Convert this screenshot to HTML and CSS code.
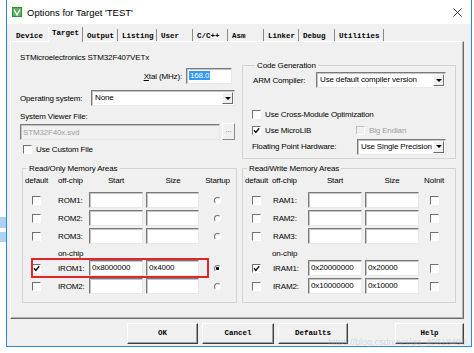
FILE: index.html
```html
<!DOCTYPE html>
<html lang="en">
<head>
    <meta charset="UTF-8">
    <meta name="viewport" content="width=device-width, initial-scale=1.0">
    <title>Options for Target 'TEST'</title>
    <link rel="stylesheet" href="styles.css">
</head>
<body>
    <div class="behind">
        <span class="frag frag-a"></span>
        <span class="frag frag-b"></span>
    </div>

    <div class="window">
        <div class="titlebar">
            <svg class="appicon" viewBox="0 0 10 10">
                <rect x="0" y="0" width="10" height="10" fill="#2f8f3a"/>
                <rect x="1" y="1" width="8" height="8" fill="#56b35c"/>
                <path d="M2 2.5 L5 8 L8 2.5" stroke="#fff" stroke-width="1.4" fill="none"/>
            </svg>
            <span class="title">Options for Target 'TEST'</span>
            <svg class="close" viewBox="0 0 9 9">
                <path d="M0.5 0.5 L8.5 8.5 M8.5 0.5 L0.5 8.5" stroke="#222" stroke-width="0.9"/>
            </svg>
        </div>

        <div class="tabs">
            <span class="tab first">Device</span>
            <span class="tab active">Target</span>
            <span class="tab">Output</span>
            <span class="tab">Listing</span>
            <span class="tab">User</span>
            <span class="tab">C/C++</span>
            <span class="tab">Asm</span>
            <span class="tab">Linker</span>
            <span class="tab">Debug</span>
            <span class="tab">Utilities</span>
        </div>

        <div class="panel">
            <div class="top">
                <div class="device">
                    <div class="row chip">STMicroelectronics STM32F407VETx</div>
                    <div class="row xtal">
                        <span><u>X</u>tal (MHz):</span>
                        <span class="edit xtal-edit"><span class="sel">168.0</span></span>
                    </div>
                    <div class="row os">
                        <span>Operating system:</span>
                        <span class="combo os-combo"><span class="val">None</span><span class="drop"><i></i></span></span>
                    </div>
                    <div class="row svlabel">System Viewer File:</div>
                    <div class="row svrow">
                        <span class="edit disabled sv-edit">STM32F40x.svd</span>
                        <span class="dots">...</span>
                    </div>
                    <div class="row custom">
                        <span class="cb"></span>
                        <span class="cb-text">Use Custom File</span>
                    </div>
                </div>

                <div class="group codegen">
                    <span class="caption">Code Generation</span>
                    <div class="row arm">
                        <span class="arm-label">ARM Compiler:</span>
                        <span class="combo arm-combo"><span class="val">Use default compiler version</span><span class="drop"><i></i></span></span>
                    </div>
                    <div class="row cmo">
                        <span class="cb"></span>
                        <span class="cb-text">Use Cross-Module Optimization</span>
                    </div>
                    <div class="row mlib">
                        <span class="opt microlib">
                            <span class="cb checked"><svg viewBox="0 0 7 7"><path d="M1 3.3 L2.8 5.4 L6.2 1.2" stroke="#111" stroke-width="1.4" fill="none"/></svg></span>
                            <span class="cb-text">Use MicroLIB</span>
                        </span>
                        <span class="opt">
                            <span class="cb off"></span>
                            <span class="cb-text grey">Big Endian</span>
                        </span>
                    </div>
                    <div class="row fph">
                        <span>Floating Point Hardware:</span>
                        <span class="combo fph-combo"><span class="val">Use Single Precision</span><span class="drop"><i></i></span></span>
                    </div>
                </div>
            </div>

            <div class="bottom">
                <div class="group mem ro">
                    <span class="caption">Read/Only Memory Areas</span>
                    <div class="grid">
                        <span class="hd hd-l">default</span>
                        <span class="hd hd-l">off-chip</span>
                        <span class="hd hd-c">Start</span>
                        <span class="hd hd-c">Size</span>
                        <span class="hd hd-r">Startup</span>

                        <span class="cb"></span><span class="lbl">ROM1:</span>
                        <span class="edit w1"></span><span class="edit w2"></span><span class="radio"></span>

                        <span class="cb"></span><span class="lbl">ROM2:</span>
                        <span class="edit w1"></span><span class="edit w2"></span><span class="radio"></span>

                        <span class="cb"></span><span class="lbl">ROM3:</span>
                        <span class="edit w1"></span><span class="edit w2"></span><span class="radio"></span>

                        <span></span><span class="onchip">on-chip</span><span></span><span></span><span></span>

                        <span class="cb checked"><svg viewBox="0 0 7 7"><path d="M1 3.3 L2.8 5.4 L6.2 1.2" stroke="#111" stroke-width="1.4" fill="none"/></svg></span>
                        <span class="lbl">IROM1:</span>
                        <span class="edit w1">0x8000000</span><span class="edit w2">0x4000</span><span class="radio on"></span>

                        <span class="cb"></span><span class="lbl">IROM2:</span>
                        <span class="edit w1"></span><span class="edit w2"></span><span class="radio"></span>
                    </div>
                    <div class="mark"></div>
                </div>

                <div class="group mem rw">
                    <span class="caption">Read/Write Memory Areas</span>
                    <div class="grid">
                        <span class="hd hd-l">default</span>
                        <span class="hd hd-l">off-chip</span>
                        <span class="hd hd-c">Start</span>
                        <span class="hd hd-c">Size</span>
                        <span class="hd noinit">NoInit</span>

                        <span class="cb"></span><span class="lbl">RAM1:</span>
                        <span class="edit w1"></span><span class="edit w1"></span><span class="cb ni"></span>

                        <span class="cb"></span><span class="lbl">RAM2:</span>
                        <span class="edit w1"></span><span class="edit w1"></span><span class="cb ni"></span>

                        <span class="cb"></span><span class="lbl">RAM3:</span>
                        <span class="edit w1"></span><span class="edit w1"></span><span class="cb ni"></span>

                        <span></span><span class="onchip">on-chip</span><span></span><span></span><span></span>

                        <span class="cb checked"><svg viewBox="0 0 7 7"><path d="M1 3.3 L2.8 5.4 L6.2 1.2" stroke="#111" stroke-width="1.4" fill="none"/></svg></span>
                        <span class="lbl">IRAM1:</span>
                        <span class="edit w1">0x20000000</span><span class="edit w1">0x20000</span><span class="cb ni"></span>

                        <span class="cb"></span><span class="lbl">IRAM2:</span>
                        <span class="edit w1">0x10000000</span><span class="edit w1">0x10000</span><span class="cb ni"></span>
                    </div>
                </div>
            </div>
        </div>

        <div class="buttons">
            <span class="btn ok">OK</span>
            <span class="btn cancel">Cancel</span>
            <span class="btn defaults">Defaults</span>
            <span class="btn help">Help</span>
        </div>

        <div class="watermark">https://blog.csdn.net/qq_40318498</div>
    </div>
</body>
</html>
```

FILE: styles.css
```css
*{
    margin: 0;
    padding: 0;
    box-sizing: border-box;
}
body{
    display: flex;
    width: 474px;
    height: 353px;
    overflow: hidden;
    background-color: #fff;
    font-family: "Liberation Sans", Arial, sans-serif;
    font-size: 8px;
    letter-spacing: -0.15px;
    color: #000;
}

/* bits of the window behind */
.behind{
    width: 6px;
    display: flex;
    flex-direction: column;
}
.frag{
    display: block;
    height: 11px;
    background-color: #a9d2f3;
}
.frag-a{
    margin-top: 217px;
}
.frag-b{
    margin-top: 4px;
    height: 10px;
}

.window{
    width: 466px;
    height: 347px;
    border: 1px solid #2b88d8;
    border-top: 0;
    background-color: #f0f0f0;
    display: flex;
    flex-direction: column;
    position: relative;
}

/* title bar */
.titlebar{
    height: 24px;
    background-color: #fff;
    display: flex;
    align-items: center;
    padding: 0 9px 0 5px;
}
.appicon{
    width: 10px;
    height: 10px;
    margin-right: 5px;
}
.title{
    font-size: 9.5px;
    letter-spacing: 0;
}
.close{
    width: 9px;
    height: 9px;
    margin-left: auto;
}

/* tabs */
.tabs{
    display: grid;
    grid-template-columns: 36px 35px 35px 39px 36px 35px 36px 35px 36px 49px;
    height: 14px;
    margin-top: 3px;
    padding-left: 5px;
    font-family: "Liberation Mono", "Courier New", monospace;
    font-weight: bold;
    font-size: 7.5px;
    letter-spacing: 0;
    position: relative;
    z-index: 1;
}
.tab{
    height: 12px;
    margin-top: 2px;
    padding: 1px 0 0 4px;
    line-height: 12px;
    border-right: 1px solid #8a8a8a;
}
.tab.first{
    border-right: 0;
}
.tab.active{
    height: 15px;
    margin-top: 0;
    padding-top: 0;
    border-left: 1px solid #fff;
    padding-left: 3px;
    background-color: #f0f0f0;
}

/* tab page */
.panel{
    margin-left: 3px;
    width: 454px;
    height: 278px;
    border: 1px solid;
    border-color: #fff #696969 #696969 #fff;
    box-shadow: inset -1px -1px 0 #b4b4b4;
    padding: 0 7px 0 9px;
}
.row{
    display: flex;
    align-items: center;
    white-space: nowrap;
}
.top{
    display: flex;
    gap: 7px;
    height: 117px;
}
.device{
    width: 215px;
    display: flex;
    flex-direction: column;
}
.chip{
    margin-top: 9px;
    height: 12px;
}
.xtal{
    margin-top: 5px;
    height: 16px;
    justify-content: flex-end;
    gap: 4px;
    padding-right: 3px;
}
.xtal-edit{
    width: 46px;
    padding-left: 2px;
}
.sel{
    background-color: #3399ff;
    color: #fff;
    padding: 0 1px;
}
.os{
    margin-top: 6px;
    height: 16px;
}
.os-combo{
    width: 144px;
    margin-left: auto;
}
.svlabel{
    margin-top: 4px;
    height: 12px;
}
.svrow{
    margin-top: 1px;
    height: 17px;
    gap: 2px;
}
.sv-edit{
    width: 200px;
    height: 17px;
}
.dots{
    width: 13px;
    height: 17px;
    border: 1px solid;
    border-color: #fff #8a8a8a #8a8a8a #fff;
    color: #8a8a8a;
    text-align: center;
    line-height: 12px;
}
.custom{
    margin-top: 4px;
    height: 10px;
    padding-left: 3px;
}

/* group boxes */
.group{
    border: 1px solid #d3d3d3;
    display: flex;
    flex-direction: column;
}
.caption{
    align-self: flex-start;
    height: 11px;
    line-height: 11px;
    margin: -6px 0 0 3px;
    padding: 0 2px;
    background-color: #f0f0f0;
    white-space: nowrap;
}
.codegen{
    width: 214px;
    height: 94px;
    margin-top: 23px;
    padding: 0 9px;
}
.arm{
    margin-top: 1px;
    height: 16px;
}
.arm-label{
    margin-left: 1px;
}
.arm-combo{
    width: 130px;
    margin-left: auto;
}
.cmo{
    margin-top: 21px;
    height: 10px;
}
.mlib{
    margin-top: 6px;
    height: 10px;
}
.opt{
    display: flex;
    align-items: center;
}
.microlib{
    width: 104px;
}
.fph{
    margin-top: 3px;
    height: 17px;
}
.fph-combo{
    width: 89px;
    height: 17px;
    margin-left: auto;
}

/* controls */
.edit{
    display: block;
    height: 16px;
    background-color: #fff;
    border: 1px solid;
    border-color: #7a7a7a #e8e8e8 #e8e8e8 #7a7a7a;
    box-shadow: inset 1px 1px 0 #c4c4c4;
    padding-left: 2px;
    line-height: 14px;
    white-space: nowrap;
    overflow: hidden;
}
.edit.disabled{
    background-color: #f0f0f0;
    color: #a0a0a0;
    line-height: 15px;
}
.combo{
    display: flex;
    height: 16px;
    background-color: #fff;
    border: 1px solid;
    border-color: #7a7a7a #e8e8e8 #e8e8e8 #7a7a7a;
    box-shadow: inset 1px 1px 0 #c4c4c4;
}
.combo .val{
    flex: 1;
    padding-left: 3px;
    line-height: 14px;
    overflow: hidden;
}
.drop{
    width: 11px;
    margin: 1px;
    border: 1px solid;
    border-color: #fff #6a6a6a #6a6a6a #fff;
    background-color: #f0f0f0;
    display: flex;
    align-items: center;
    justify-content: center;
}
.drop i{
    border-left: 3px solid transparent;
    border-right: 3px solid transparent;
    border-top: 3px solid #000;
}
.cb{
    display: block;
    width: 9px;
    height: 9px;
    border: 1px solid;
    border-color: #6f6f6f #fff #fff #6f6f6f;
    background-color: #fcfcfc;
    flex-shrink: 0;
}
.cb svg{
    display: block;
    width: 7px;
    height: 7px;
}
.cb.off{
    border-color: #c0c0c0 #fff #fff #c0c0c0;
    background-color: #f0f0f0;
}
.cb-text{
    margin-left: 4px;
}
.grey{
    color: #a0a0a0;
}
.radio{
    display: block;
    width: 7px;
    height: 7px;
    border-radius: 50%;
    border: 1px solid;
    border-color: #6f6f6f #fff #fff #6f6f6f;
    background-color: #fcfcfc;
    justify-self: center;
    align-self: center;
}
.radio.on{
    background: radial-gradient(circle, #000 1.3px, #fcfcfc 1.8px);
}

/* memory areas */
.bottom{
    display: flex;
    gap: 5px;
    margin-top: 9px;
    padding-left: 2px;
}
.mem{
    height: 135px;
    position: relative;
}
.mem .caption{
    margin-left: 4px;
}
.ro{
    width: 215px;
}
.rw{
    width: 214px;
}
.grid{
    display: grid;
    row-gap: 2px;
    margin-top: 1px;
    grid-template-rows: 15px 16px 16px 16px 12px 16px 16px;
}
.ro .grid{
    grid-template-columns: 33px 33px 57px 53px 1fr;
}
.rw .grid{
    grid-template-columns: 27px 38px 57px 55px 1fr;
}
.hd{
    line-height: 11px;
    align-self: start;
    white-space: nowrap;
}
.hd-l{
    margin-left: 2px;
}
.hd-c{
    width: 54px;
    text-align: center;
}
.hd-r{
    text-align: center;
}
.noinit{
    margin-left: 4px;
}
.grid .cb{
    align-self: center;
    margin-left: 9px;
}
.grid .cb.ni{
    margin-left: 10px;
}
.lbl{
    align-self: center;
    margin-left: 2px;
    white-space: nowrap;
}
.rw .lbl{
    margin-left: 3px;
}
.onchip{
    align-self: end;
    margin-left: 2px;
    line-height: 9px;
    white-space: nowrap;
}
.w1{
    width: 54px;
}
.w2{
    width: 53px;
}
.mark{
    position: absolute;
    left: 8px;
    top: 89px;
    width: 178px;
    height: 20px;
    border: 2px solid #e2262b;
}

/* dialog buttons */
.buttons{
    display: flex;
    gap: 4px;
    height: 21px;
    margin-top: 4px;
    padding-left: 120px;
    font-family: "Liberation Mono", "Courier New", monospace;
    font-size: 7.5px;
    letter-spacing: 0;
}
.btn{
    border: 1px solid;
    border-color: #fff #404040 #404040 #fff;
    box-shadow: inset -1px -1px 0 #a0a0a0;
    background-color: #f0f0f0;
    text-align: center;
    line-height: 19px;
    font-weight: bold;
}
.ok{
    width: 71px;
}
.cancel{
    width: 72px;
}
.defaults{
    width: 70px;
}
.help{
    width: 69px;
    margin-left: 43px;
}
.watermark{
    position: absolute;
    right: 5px;
    bottom: -1px;
    font-size: 9px;
    line-height: 9px;
    letter-spacing: 0;
    color: rgba(170, 185, 200, 0.45);
}
```
